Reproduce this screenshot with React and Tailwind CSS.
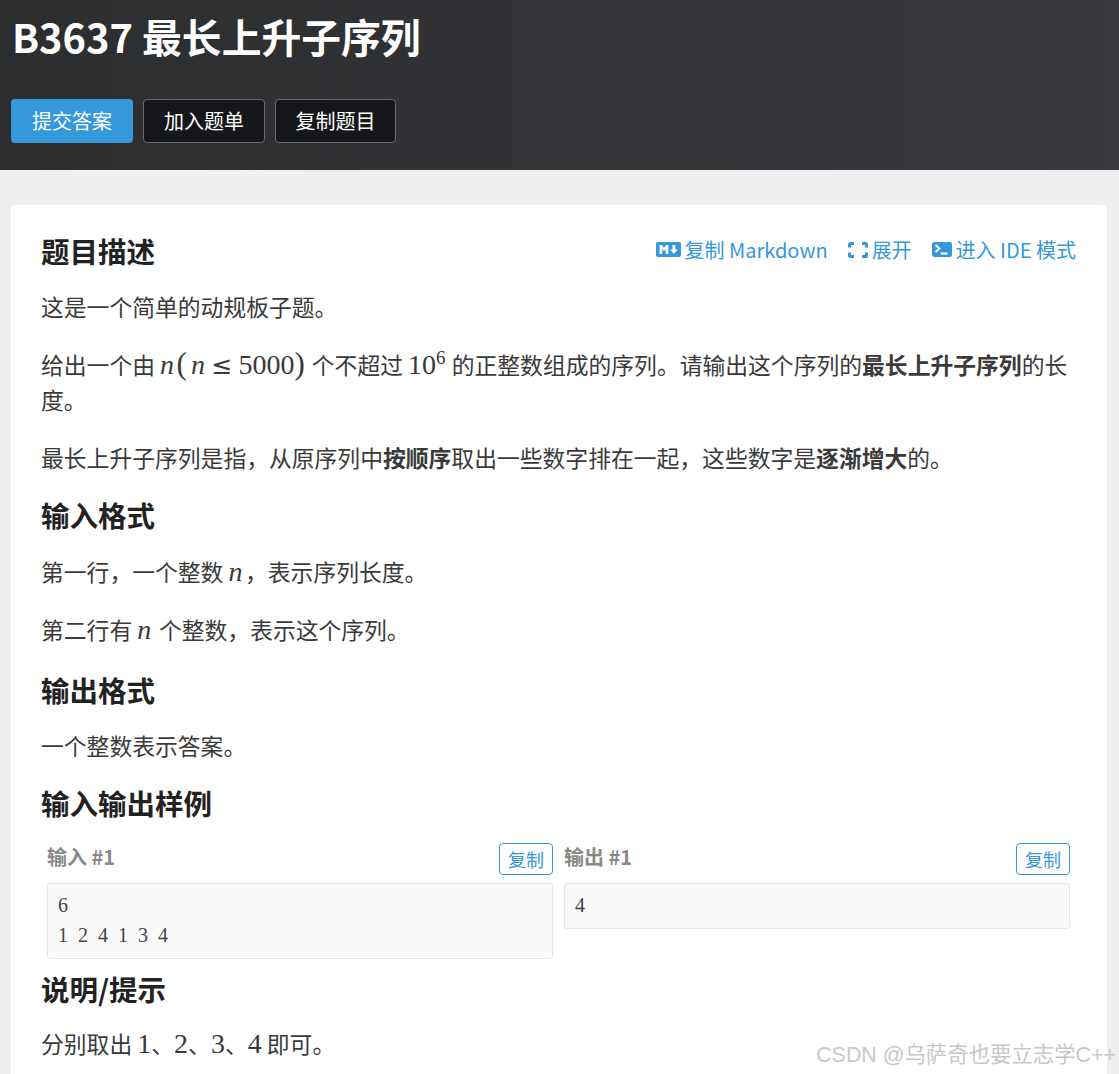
const CJK = "font-['Noto_Sans_CJK_SC',sans-serif]"

function M({ children }) {
  return <span className="font-['Liberation_Serif',serif] text-[28px] leading-none">{children}</span>
}

function V({ children }) {
  return <span className="font-['Liberation_Serif',serif] italic text-[28px] leading-none tracking-[2.5px]">{children}</span>
}

function Heading({ spacing, children }) {
  return <h2 className={`text-[28.5px] leading-[40px] font-bold text-[#222] ${spacing}`}>{children}</h2>
}

function P({ children }) {
  return <p className="text-[22.8px] leading-[35.5px] mb-[22px]">{children}</p>
}

function Sample({ label, lines }) {
  return (
    <div className="flex-1 min-w-0">
      <div className="flex items-center justify-between h-[32px] mt-[2px] mb-[8px]">
        <span className="text-[20px] font-bold text-[#888] -mt-[3px]">{label}</span>
        <button className="h-[32px] w-[54px] rounded-[4px] border border-[#3498db] text-[#3498db] text-[18px] leading-none">复制</button>
      </div>
      <pre className="bg-[#fafafa] border border-[#e6e6e6] rounded-[3px] px-[10px] pt-[6px] pb-[8px] text-[20px] leading-[30px] text-[#444] [word-spacing:5px] font-['Liberation_Serif',serif]">
        {lines.join('\n')}
      </pre>
    </div>
  )
}

function HeadLink({ icon, children }) {
  return (
    <a className="flex items-center gap-[4px] text-[20px] text-[#3498db]">
      {icon}
      {children}
    </a>
  )
}

export default function App() {
  return (
    <div className={`relative h-[1074px] overflow-hidden bg-[#efefef] text-[#3a3a3a] ${CJK}`}>
      <header className="h-[170px] bg-linear-to-r from-[#2c2d2f] to-[#37393c] px-[11px]">
        <h1 className="pt-[7px] pl-[1px] text-[39.8px] leading-[58px] font-bold text-white">B3637 最长上升子序列</h1>
        <div className="flex gap-[10px] mt-[34px]">
          <button className="h-[44px] w-[122px] rounded-[4px] bg-[#3498db] text-white text-[20px]">提交答案</button>
          <button className="h-[44px] w-[122px] rounded-[4px] bg-[#16171a] border border-[#6b6b6b] text-white text-[20px]">加入题单</button>
          <button className="h-[44px] w-[121px] rounded-[4px] bg-[#16171a] border border-[#6b6b6b] text-white text-[20px]">复制题目</button>
        </div>
      </header>

      <main className="ml-[11px] mr-[12px] mt-[35px] bg-white rounded-[5px] h-[900px] px-[30px] pt-[26px]">
        <div className="flex items-center justify-between mb-[18px] h-[40px]">
          <h2 className="text-[28.5px] leading-[40px] font-bold text-[#222]">题目描述</h2>
          <div className="flex gap-[20px] -mt-[3px] mr-[1px]">
            <HeadLink icon={
              <svg width="25" height="15" viewBox="0 0 25 15">
                <rect width="25" height="15" rx="2" fill="#3498db" />
                <path d="M3.5 12V3h2.4l2 3 2-3h2.4v9H9.6V6.8L7.9 9.2 6.2 6.8V12zM16.5 3h2.8v4.4h2.4L17.9 12l-3.8-4.6h2.4z" fill="#fff" />
              </svg>
            }>复制 Markdown</HeadLink>
            <HeadLink icon={
              <svg width="20" height="16" viewBox="0 0 20 16" fill="none" stroke="#3498db" strokeWidth="3">
                <path d="M6 1.5H2.5a1 1 0 0 0-1 1V5.5M14 1.5h3.5a1 1 0 0 1 1 1V5.5M6 14.5H2.5a1 1 0 0 1-1-1V10.5M14 14.5h3.5a1 1 0 0 0 1-1V10.5" />
              </svg>
            }>展开</HeadLink>
            <HeadLink icon={
              <svg width="20" height="15" viewBox="0 0 20 15">
                <rect width="20" height="15" rx="2.5" fill="#3498db" />
                <path d="M3.5 3 7.5 6.5l-4 3.5" fill="none" stroke="#fff" strokeWidth="2" />
                <path d="M8.5 11.5h7" stroke="#fff" strokeWidth="2" />
              </svg>
            }>进入 IDE 模式</HeadLink>
          </div>
        </div>

        <P>这是一个简单的动规板子题。</P>
        <P>
          给出一个由 <V>n</V><span className="font-['Liberation_Serif',serif] text-[31px] leading-none">(</span><span className="ml-[4px]"><V>n</V></span><span className="font-['DejaVu_Sans',sans-serif] text-[25px] leading-none ml-[4px] mr-[6px]">≤</span><M>5000</M><span className="font-['Liberation_Serif',serif] text-[31px] leading-none mr-[2px]">)</span> 个不超过 <M>10<sup className="text-[19px] mr-[1px]">6</sup></M> 的正整数组成的序列。请输出这个序列的<b>最长上升子序列</b>的长度。
        </P>
        <P>最长上升子序列是指，从原序列中<b>按顺序</b>取出一些数字排在一起，这些数字是<b>逐渐增大</b>的。</P>

        <Heading spacing="-mt-[2px] mb-[19px]">输入格式</Heading>
        <P>第一行，一个整数 <V>n</V>，表示序列长度。</P>
        <P>第二行有 <V>n</V> 个整数，表示这个序列。</P>

        <Heading spacing="mt-[23px] mb-[18px]">输出格式</Heading>
        <P>一个整数表示答案。</P>

        <Heading spacing="-mt-[3px] mb-[18px]">输入输出样例</Heading>
        <div className="flex items-start gap-[11px] pl-[6px] pr-[7px] -mb-[13px]">
          <Sample label="输入 #1" lines={['6', '1 2 4 1 3 4']} />
          <Sample label="输出 #1" lines={['4']} />
        </div>

        <Heading spacing="mt-[23px] mb-[17px]">说明/提示</Heading>
        <P>分别取出 <M>1</M>、<M>2</M>、<M>3</M>、<M>4</M> 即可。</P>
      </main>

      <div className="absolute right-[3px] bottom-[4px] text-[21.4px] leading-[30px] text-[#c8c8c8] font-['Liberation_Sans','Noto_Sans_CJK_SC',sans-serif]">CSDN @乌萨奇也要立志学C++</div>
    </div>
  )
}
